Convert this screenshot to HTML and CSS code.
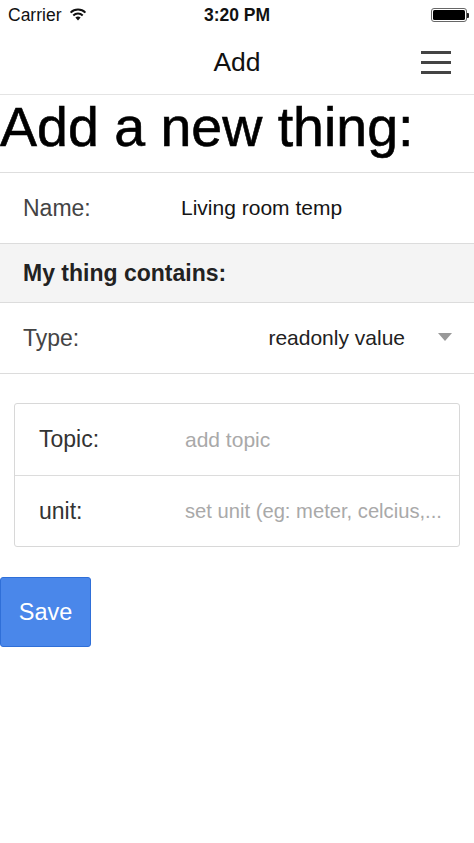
FILE: index.html
```html
<!DOCTYPE html>
<html>
<head>
<meta charset="utf-8">
<link rel="stylesheet" href="styles.css">
</head>
<body>
<div class="status">
  <div class="status-left">
    <span class="carrier">Carrier</span>
    <svg class="wifi" width="18" height="13" viewBox="0 0 18 13">
      <path d="M9 12.5 L6.4 9.6 A3.8 3.8 0 0 1 11.6 9.6 Z" fill="#111"/>
      <path d="M4.3 7.5 A6.8 6.8 0 0 1 13.7 7.5" fill="none" stroke="#111" stroke-width="2"/>
      <path d="M1.6 4.6 A10.6 10.6 0 0 1 16.4 4.6" fill="none" stroke="#111" stroke-width="2"/>
    </svg>
  </div>
  <div class="time">3:20 PM</div>
  <div class="status-right">
    <div class="battery"><div class="battery-fill"></div></div>
    <div class="battery-nub"></div>
  </div>
</div>
<div class="nav">
  <div class="nav-title">Add</div>
  <div class="menu">
    <span></span><span></span><span></span>
  </div>
</div>
<h1 class="heading">Add a new thing:</h1>
<div class="row">
  <div class="label">Name:</div>
  <div class="value">Living room temp</div>
</div>
<div class="section">My thing contains:</div>
<div class="row">
  <div class="label">Type:</div>
  <div class="select">
    <span class="select-value">readonly value</span>
    <span class="caret"></span>
  </div>
</div>
<div class="card">
  <div class="card-row">
    <div class="card-label">Topic:</div>
    <div class="placeholder">add topic</div>
  </div>
  <div class="card-row">
    <div class="card-label">unit:</div>
    <div class="placeholder unit-ph">set unit (eg: meter, celcius,...</div>
  </div>
</div>
<div class="actions">
  <button class="save">Save</button>
</div>
</body>
</html>
```
FILE: styles.css
```css
* { box-sizing: border-box; }
html, body { margin: 0; padding: 0; background: #fff; }
body {
  font-family: "Liberation Sans", Arial, sans-serif;
  color: #111;
  width: 474px;
}
.status {
  height: 30px;
  display: flex;
  align-items: center;
  justify-content: space-between;
  padding: 0 5px 0 8px;
  position: relative;
}
.status-left { display: flex; align-items: center; gap: 8px; }
.carrier { font-size: 17.5px; color: #111; }
.wifi { margin-top: -2px; }
.time {
  position: absolute;
  left: 0; right: 0;
  text-align: center;
  font-size: 17.5px;
  font-weight: bold;
  color: #111;
  pointer-events: none;
}
.status-right { display: flex; align-items: center; }
.battery {
  width: 36px; height: 14px;
  border: 1.5px solid #666;
  border-radius: 3px;
  padding: 1px;
}
.battery-fill { width: 100%; height: 100%; background: #000; border-radius: 1.5px; }
.battery-nub { width: 2.5px; height: 5px; background: #222; border-radius: 0 1px 1px 0; }

.nav {
  height: 65px;
  border-bottom: 1px solid #e4e4e4;
  display: flex;
  align-items: center;
  justify-content: center;
  position: relative;
}
.nav-title { font-size: 26.5px; color: #111; }
.menu {
  position: absolute;
  right: 23px;
  top: 21px;
  width: 30px;
  display: flex;
  flex-direction: column;
  gap: 7.5px;
}
.menu span { display: block; height: 2.5px; background: #444; }

.heading {
  margin: 0;
  height: 78px;
  font-size: 55.5px;
  font-weight: normal;
  line-height: 64px;
  padding-bottom: 14px;
  padding-top: 0;
  color: #000;
  border-bottom: 1px solid #dedede;
  -webkit-text-stroke: 0.6px #000;
  display: flex;
  align-items: center;
}
.row {
  height: 71px;
  display: flex;
  align-items: center;
  padding: 0 22px 0 23px;
  border-bottom: 1px solid #dcdcdc;
}
.label { width: 158px; font-size: 23px; color: #444; }
.value { font-size: 21px; color: #151515; }
.section {
  height: 59px;
  background: #f4f4f4;
  border-bottom: 1px solid #dcdcdc;
  display: flex;
  align-items: center;
  padding-left: 23px;
  font-size: 23px;
  font-weight: bold;
  color: #222;
}
.select { margin-left: auto; display: flex; align-items: center; gap: 33px; }
.select-value { font-size: 21px; color: #222; }
.caret {
  width: 0; height: 0;
  border-left: 7.5px solid transparent;
  border-right: 7.5px solid transparent;
  border-top: 8px solid #999;
  margin-top: -2px;
}
.card {
  margin: 29px 14px 0 14px;
  border: 1px solid #d8d8d8;
  border-radius: 3px;
}
.card-row {
  height: 71px;
  display: flex;
  align-items: center;
  padding: 0 8px 0 24px;
}
.card-row + .card-row { border-top: 1px solid #dcdcdc; }
.card-label { width: 146px; flex: none; font-size: 23px; color: #333; }
.placeholder {
  font-size: 21px;
  color: #a9a9a9;
  white-space: nowrap;
}
.unit-ph { font-size: 20.2px; }
.actions { padding-top: 30px; }
.save {
  display: block;
  width: 91px;
  height: 70px;
  background: #4a87ea;
  border: 1px solid #2f6fd8;
  border-radius: 3px;
  color: #fff;
  font-family: "Liberation Sans", Arial, sans-serif;
  font-size: 23.5px;
  padding: 0;
  margin: 0;
}
```
